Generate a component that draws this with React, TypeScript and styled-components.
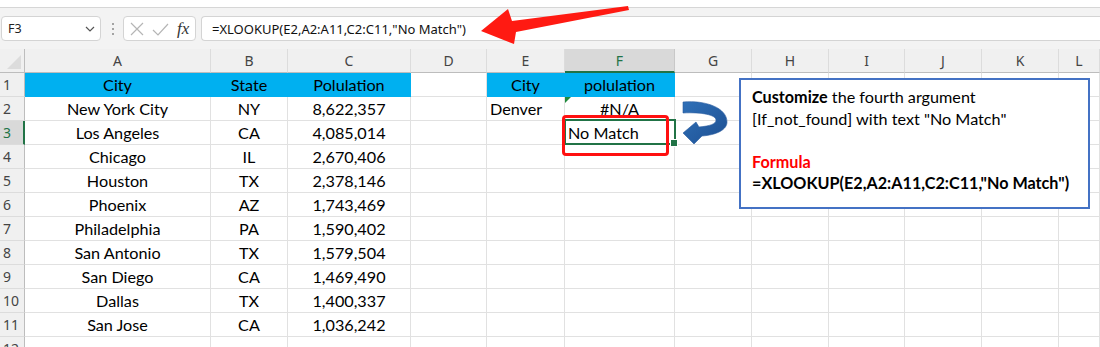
import styled, { createGlobalStyle } from 'styled-components';

const GlobalStyle = createGlobalStyle`
  html, body {
    margin: 0;
    padding: 0;
    background: #ffffff;
  }
  body {
    font-family: Lato, "Noto Sans", sans-serif;
  }
`;

const Page = styled.div`
  position: relative;
  width: 1100px;
  height: 347px;
  overflow: hidden;
  background: #ffffff;
`;

const TopStrip = styled.div`
  height: 7px;
  background: #ffffff;
  border-bottom: 1px solid #d6d6d6;
`;

const FormulaBar = styled.div`
  display: flex;
  align-items: center;
  height: 41px;
  padding: 0 0 0 1px;
  box-sizing: border-box;
  background: #f3f3f3;
`;

const NameBox = styled.div`
  display: flex;
  align-items: center;
  justify-content: space-between;
  width: 100px;
  height: 25px;
  box-sizing: border-box;
  padding: 0 4px 0 6px;
  background: #ffffff;
  border: 1px solid #d4d4d4;
  border-radius: 4px;
  font-family: "Noto Sans", sans-serif;
  font-size: 12.5px;
  color: #222;
`;

const Dots = styled.div`
  display: flex;
  flex-direction: column;
  gap: 3px;
  margin: 0 9px 0 11px;
  span {
    width: 2px;
    height: 2px;
    background: #888;
    border-radius: 1px;
  }
`;

const FxBox = styled.div`
  display: flex;
  align-items: center;
  gap: 6px;
  width: 73px;
  height: 25px;
  box-sizing: border-box;
  padding: 0 4px 0 5px;
  background: #ffffff;
  border: 1px solid #d4d4d4;
  border-radius: 4px;
`;

const Fx = styled.span`
  font-family: "Liberation Serif", serif;
  font-style: italic;
  font-size: 17px;
  color: #333;
  margin-left: 2px;
`;

const FormulaInput = styled.div`
  flex: 1;
  display: flex;
  align-items: center;
  height: 25px;
  margin-left: 5px;
  box-sizing: border-box;
  padding-left: 10px;
  background: #ffffff;
  border: 1px solid #d4d4d4;
  border-right: none;
  border-radius: 4px 0 0 4px;
  font-family: "Noto Sans", sans-serif;
  font-size: 13px;
  color: #111;
`;

const Sheet = styled.div`
  display: grid;
  grid-template-columns: 25px 186px 77px 123px 76px 78px 110px 77px 77px 76px 77px 77px 1fr;
  grid-auto-rows: 24px;
`;

const ColHead = styled.div<{ $active?: boolean }>`
  display: flex;
  align-items: center;
  justify-content: center;
  box-sizing: border-box;
  background: ${(p) => (p.$active ? '#d9d9d9' : '#f0f0f0')};
  border-right: 1px solid ${(p) => (p.$active ? '#c8c8c8' : '#dcdcdc')};
  border-bottom: ${(p) => (p.$active ? '2px solid #217346' : '1px solid #bdbdbd')};
  font-family: "Noto Sans", sans-serif;
  font-size: 14px;
  color: ${(p) => (p.$active ? '#217346' : '#444')};
`;

const Corner = styled.div`
  position: relative;
  background: #f0f0f0;
  box-sizing: border-box;
  border-right: 1px solid #bdbdbd;
  border-bottom: 1px solid #bdbdbd;
  &::after {
    content: '';
    position: absolute;
    right: 3px;
    bottom: 3px;
    border-left: 14px solid transparent;
    border-bottom: 14px solid #dcdcdc;
  }
`;

const RowHead = styled.div<{ $active?: boolean }>`
  display: flex;
  align-items: center;
  padding-left: 3px;
  box-sizing: border-box;
  background: ${(p) => (p.$active ? '#d9d9d9' : '#f0f0f0')};
  border-right: ${(p) => (p.$active ? '2px solid #217346' : '1px solid #bdbdbd')};
  border-bottom: 1px solid #dcdcdc;
  font-family: "Noto Sans", sans-serif;
  font-size: 14px;
  color: ${(p) => (p.$active ? '#217346' : '#444')};
`;

const Cell = styled.div<{ $fill?: boolean; $left?: boolean; $err?: boolean }>`
  position: relative;
  display: flex;
  align-items: center;
  justify-content: ${(p) => (p.$left ? 'flex-start' : 'center')};
  padding: 0 3px;
  box-sizing: border-box;
  background: ${(p) => (p.$fill ? '#00b0f0' : '#ffffff')};
  border-right: 1px solid ${(p) => (p.$fill ? '#00b0f0' : '#e1e1e1')};
  border-bottom: 1px solid ${(p) => (p.$fill ? '#00b0f0' : '#e1e1e1')};
  font-size: 16.2px;
  color: #000;
  white-space: nowrap;
  ${(p) =>
    p.$err &&
    `&::before {
      content: '';
      position: absolute;
      left: 0;
      top: 0;
      border-top: 6px solid #1e8a3c;
      border-right: 6px solid transparent;
    }`}
`;

const Selection = styled.div`
  position: absolute;
  left: 564px;
  top: 119px;
  width: 112px;
  height: 26px;
  box-sizing: border-box;
  border: 2px solid #217346;
  pointer-events: none;
  &::after {
    content: '';
    position: absolute;
    right: -4px;
    bottom: -4px;
    width: 6px;
    height: 6px;
    background: #217346;
    border: 1px solid #fff;
  }
`;

const RedFrame = styled.div`
  position: absolute;
  left: 562px;
  top: 115px;
  width: 107px;
  height: 41px;
  box-sizing: border-box;
  border: 3px solid #ff1010;
  border-radius: 4px;
`;

const Callout = styled.div`
  position: absolute;
  left: 739px;
  top: 78px;
  width: 351px;
  height: 131px;
  box-sizing: border-box;
  padding: 6px 11px;
  background: #ffffff;
  border: 2px solid #4472c4;
  font-size: 16.2px;
  line-height: 21.5px;
  color: #000;
`;

const Line = styled.div<{ $bold?: boolean; $red?: boolean }>`
  min-height: 21.5px;
  white-space: nowrap;
  font-weight: ${(p) => (p.$bold ? 700 : 400)};
  color: ${(p) => (p.$red ? '#ff0000' : '#000')};
`;

const Overlay = styled.svg`
  position: absolute;
  overflow: visible;
`;

const cols = ['A', 'B', 'C', 'D', 'E', 'F', 'G', 'H', 'I', 'J', 'K', 'L'];

const data: [string, string, string][] = [
  ['New York City', 'NY', '8,622,357'],
  ['Los Angeles', 'CA', '4,085,014'],
  ['Chicago', 'IL', '2,670,406'],
  ['Houston', 'TX', '2,378,146'],
  ['Phoenix', 'AZ', '1,743,469'],
  ['Philadelphia', 'PA', '1,590,402'],
  ['San Antonio', 'TX', '1,579,504'],
  ['San Diego', 'CA', '1,469,490'],
  ['Dallas', 'TX', '1,400,337'],
  ['San Jose', 'CA', '1,036,242'],
];

const rowCells = (r: number): JSX.Element[] => {
  const base: string[] = new Array(12).fill('');
  if (r === 1) {
    base[0] = 'City';
    base[1] = 'State';
    base[2] = 'Polulation';
    base[4] = 'City';
    base[5] = 'polulation';
  } else if (r <= 11) {
    const d = data[r - 2];
    base[0] = d[0];
    base[1] = d[1];
    base[2] = d[2];
  }
  if (r === 2) {
    base[4] = 'Denver';
    base[5] = '#N/A';
  }
  if (r === 3) base[5] = 'No Match';
  return base.map((v, i) => {
    const fill = r === 1 && (i <= 2 || i === 4 || i === 5);
    const left = (r === 2 && i === 4) || (r === 3 && i === 5);
    return (
      <Cell key={`${r}-${i}`} $fill={fill} $left={left} $err={r === 2 && i === 5}>
        {v}
      </Cell>
    );
  });
};

const App = () => {
  const rows = Array.from({ length: 12 }, (_, i) => i + 1);
  return (
    <Page>
      <GlobalStyle />
      <TopStrip />
      <FormulaBar>
        <NameBox>
          F3
          <svg width="12" height="8" viewBox="0 0 12 8">
            <path d="M2 2 L6 6 L10 2" fill="none" stroke="#555" strokeWidth="1.2" />
          </svg>
        </NameBox>
        <Dots>
          <span />
          <span />
          <span />
        </Dots>
        <FxBox>
          <svg width="16" height="16" viewBox="0 0 16 16">
            <path d="M2 2 L14 14 M14 2 L2 14" stroke="#b5b5b5" strokeWidth="1.2" />
          </svg>
          <svg width="18" height="16" viewBox="0 0 18 16">
            <path d="M2 9 L7 14 L17 3" fill="none" stroke="#b5b5b5" strokeWidth="1.2" />
          </svg>
          <Fx>fx</Fx>
        </FxBox>
        <FormulaInput>=XLOOKUP(E2,A2:A11,C2:C11,"No Match")</FormulaInput>
      </FormulaBar>
      <Sheet>
        <Corner />
        {cols.map((c) => (
          <ColHead key={c} $active={c === 'F'}>
            {c}
          </ColHead>
        ))}
        {rows.map((r) => [
          <RowHead key={`h${r}`} $active={r === 3}>
            {r}
          </RowHead>,
          ...rowCells(r),
        ])}
      </Sheet>
      <Selection />
      <RedFrame />
      <Overlay width="1" height="1" style={{ left: 0, top: 0 }}>
        <polygon
          points="481,31 508,9 512,21 628,6 629,10 516,32 514,44"
          fill="#ff1a12"
        />
      </Overlay>
      <Overlay width="50" height="50" style={{ left: 680, top: 98 }}>
        <defs>
          <linearGradient id="blueArrow" x1="0" y1="0" x2="1" y2="1">
            <stop offset="0" stopColor="#2f70b8" />
            <stop offset="1" stopColor="#1d4f91" />
          </linearGradient>
        </defs>
        <path
          d="M3 4 C26 2 47 10 47 24 C47 32 36 37 22 38 L14 46 L3 35 L16 24 L19 29 C30 28 36 26 36 22 C36 17 22 14 3 15 Z"
          fill="url(#blueArrow)"
          stroke="#2a5d9f"
          strokeWidth="0.6"
        />
      </Overlay>
      <Callout>
        <Line>
          <b>Customize</b> the fourth argument
        </Line>
        <Line>[If_not_found] with text "No Match"</Line>
        <Line />
        <Line $bold $red>
          Formula
        </Line>
        <Line $bold>=XLOOKUP(E2,A2:A11,C2:C11,"No Match")</Line>
      </Callout>
    </Page>
  );
};

export default App;
